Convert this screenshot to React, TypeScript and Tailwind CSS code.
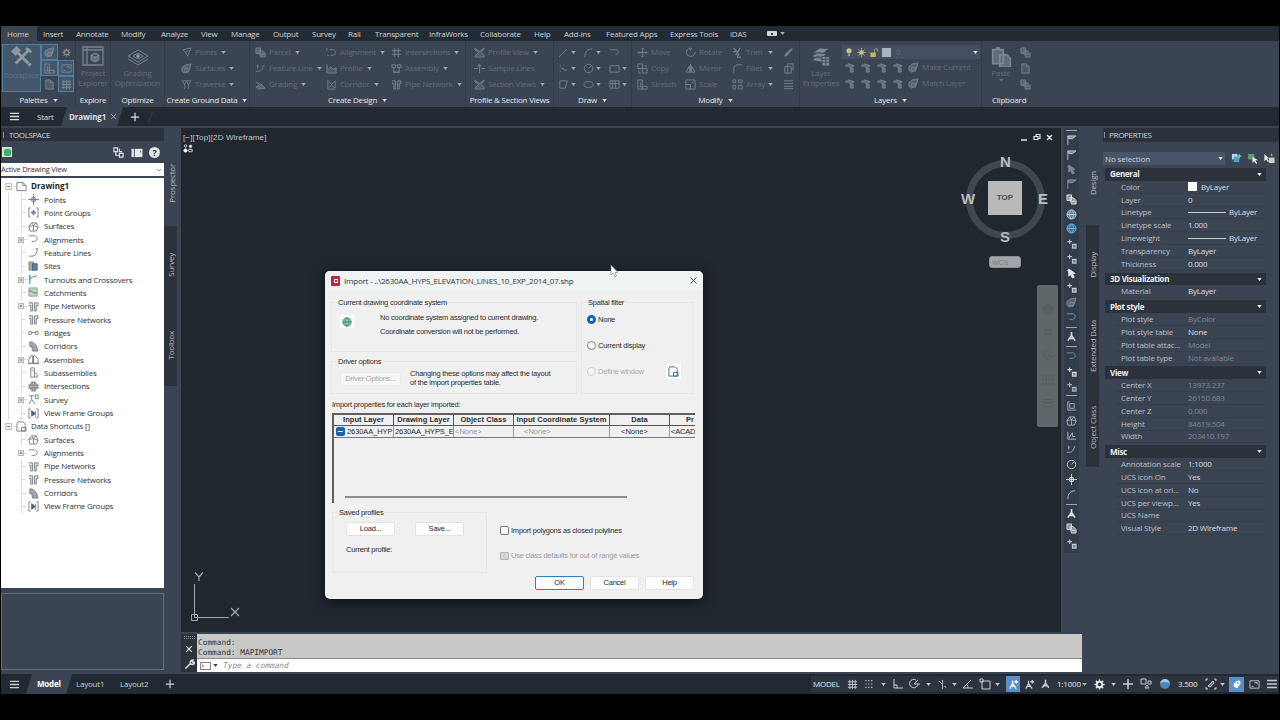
import type { ReactNode } from "react";
import clsx from "clsx";

const glyphs: Record<string, ReactNode> = {
  tools: (
    <>
      <path d="M2.5 2.5l7 7M9.5 2.5l-7 7" strokeWidth="1.6" />
      <path d="M1 3l2-2 1.5 1.5-2 2zM8 1.5c1 0 2 .5 3 2M9.5 10.8l1.3-1.3" strokeWidth="1.4" />
    </>
  ),
  points: <path d="M2 3l9-2-4 9-2-4zM5 6l3-2" />,
  surface: <path d="M1 5l4-3 6-1-2 7-5 3-3-2zM4 6h4v4H4z" fill="currentColor" fillOpacity=".5" />,
  traverse: <path d="M1 2h10M1 2l3 4 2-4 2 4 3-4M4 6v5M8 6v5" />,
  parcel: <path d="M1 1h5v6H1zM4 4h4l3 3v4H6zM6 8h4" fill="currentColor" fillOpacity=".5" />,
  feature: <path d="M1 9h3c4 0 4-4 6-7M3 2v4M2 3l2 1" />,
  grading: <path d="M1 3l4 3-4 3 3 2 7-1-5-5" fill="currentColor" fillOpacity=".5" />,
  align: <path d="M1 9h2M4 3h4c3 0 3 6 0 6H5M1 1v3" />,
  profile: <path d="M1 1v10h10V5L8 7 5 4 3 7" fill="currentColor" fillOpacity=".4" />,
  corridor: <path d="M2 1v10h8M3 2l3 4 4-4v8L6 7 3 9" />,
  inter: <path d="M4 1v10M8 1v10M1 4h10M1 8h10" />,
  assembly: <path d="M1 2h4v3H1zM7 2h4v3H7zM3 5v5h6V5M2 10h8" />,
  pipe: <path d="M1 2h4v9H3V5H1M7 2h4v3H9v6H7z" fill="currentColor" fillOpacity=".25" />,
  pview: <path d="M1 1v2l4 3-4 4v1h10v-2L8 6l3-4V1L6 5z" fill="currentColor" fillOpacity=".4" />,
  sample: <path d="M0 6h4M6 2v9M4 4l2-3 2 3M8 6h4" />,
  line: <path d="M1 11L10 2" />,
  arc: <path d="M2 11C2 5 5 2 10 2" />,
  pline: <path d="M1 3h6c5 0 5 5 0 5" />,
  dots: <path d="M2 3h1M6 2h1M5 6h1M2 9h1M8 9l2-2M3 5l5 3" />,
  circle: (
    <>
      <circle cx="6" cy="6" r="4.6" />
      <path d="M6 6l3-3" />
    </>
  ),
  rect: <path d="M1 3h10v7H1zM1 6h1" />,
  poly: <path d="M2 2h8l-2 8H2z" />,
  ellipse: <ellipse cx="6" cy="6" rx="5" ry="3.2" />,
  hatch: <path d="M1 2h10v8H1zM4 2v8M7 2v8M1 5h10" />,
  move: <path d="M6 1v10M1 6h10M4.5 2.5L6 1l1.5 1.5M4.5 9.5L6 11l1.5-1.5M2.5 4.5L1 6l1.5 1.5M9.5 4.5L11 6 9.5 7.5" />,
  copy: <path d="M1 1h5v5H1zM6 6h5v5H6zM8 3l2 0v2M2 8v3h2" />,
  stretch: <path d="M1 1h5v10H1zM6 8h5v3H6M4 3v6M3 8l1 1 1-1" />,
  rotate: <path d="M5 1.5A4.5 4.5 0 1 0 10.5 7M10.5 7l1-2M8 2L5 1l1 3" />,
  mirror: <path d="M6 1v10M5 3L1 10h4zM7 3l4 7H7z" />,
  scale: <path d="M1 1h10v10H1zM1 6h5v5M7 5l2-2" />,
  trim: <path d="M2 1l6 8M9 1L4 9M1 5h4M8 9a1.5 1.5 0 1 0 1 1" strokeWidth="1.3" />,
  fillet: <path d="M2 11V7c0-4 2-5 6-5h3" />,
  array: <path d="M1 1h3v3H1zM1 7h3v4H1zM7 1h4v3H7zM7 7h4v4H7z" />,
  brush: <path d="M2 10l2-3 6-5-5 6z" strokeWidth="1.6" />,
  explode: <path d="M2 4h7v7H2zM5 4V1h6v6H9M5 4v7" />,
  offset: <path d="M1 2h10M1 5h10M1 8h10M1 10.5h10" />,
  layer: <path d="M1 4l4-2 6 2-3 3-3-2zM7 7h3v4H7z" fill="currentColor" fillOpacity=".7" />,
  page: <path d="M2 1h5l3 3v7H2zM7 1v3h3" fill="currentColor" fillOpacity=".35" />,
  doc: <path d="M1 1.500h6.500l3.500 3.500v5.500H1zM7.500 1.500V5H11" />,
  target: (
    <>
      <path d="M6 0v12M0 6h12" />
      <circle cx="6" cy="6" r="2.5" fill="currentColor" fillOpacity=".4" />
    </>
  ),
  pgroup: <path d="M3 1H1v10h2M9 1h2v10H9M6 3v6M3 6h6M4.5 4.5h3v3h-3z" />,
  tin: <path d="M1 6l3-4 5 0 2 5-2 4H2zM1 6l5-1 5 2M4 2l2 3 3-3M6 5v6" />,
  hook: <path d="M1 2h6c4 0 4 6 0 6H4" />,
  curve: <path d="M1 10h3c4 0 5-2 6-6V2M8 2h3" />,
  sites: (
    <>
      <path d="M1 1h5v9H1z" stroke="#a58f62" fill="#9cab99" />
      <path d="M5 3h5v7H5z" stroke="#3f5b78" fill="#5486ae" />
    </>
  ),
  turnout: (
    <>
      <path d="M2 11V7c0-3 3-4 8-5" stroke="#3478a8" />
      <path d="M2 1v6" stroke="#38a0d0" strokeWidth="1.6" />
    </>
  ),
  catchment: (
    <>
      <path d="M1 1h9v9H1z" stroke="#b49777" fill="#b8d5c0" />
      <path d="M1 4c4 0 4 4 9 2" stroke="#3e80bb" />
    </>
  ),
  bridge: <path d="M1 5h3v3H1zM8 5h3v3H8zM4 6h4" />,
  road: <path d="M2 1h2c5 2 6 6 7 10H5L4 6H2z" fill="currentColor" fillOpacity=".7" />,
  bell: <path d="M1 10V6l2-4h2v8zM6 10V2h2l3 4v4zM0 10.500h12" />,
  sub: <path d="M3 1h4v10H3zM7 6l3 2v3H7M4 4h2" />,
  cross: (
    <>
      <circle cx="6" cy="6" r="4.500" fill="currentColor" fillOpacity=".5" />
      <path d="M4.500 0v12M7.500 0v12M0 4.500h12M0 7.500h12" />
    </>
  ),
  globe: (
    <>
      <circle cx="6" cy="6" r="5" fill="currentColor" fillOpacity=".45" />
      <path d="M1 6h10M6 1c-3 3-3 7 0 10M6 1c3 3 3 7 0 10" />
    </>
  ),
  survey: <path d="M1 2h6M4 2v4l-3 5M4 6l4 5M8 1h3v4H8z" />,
  vframe: (
    <>
      <path d="M3 1H1v10h2M9 1h2v10H9M8 3v7" />
      <path d="M4 3v6l4-3z" fill="#44617d" stroke="#44617d" />
    </>
  ),
  folder: <path d="M1 3l1-2h6l2 2v8H1zM6 7h5v4H6z" />,
  flag: <path d="M2 11V1M2 1h9L7 4H3z" fill="currentColor" fillOpacity=".6" />,
  node: <path d="M4 1.500v5M1.500 4h5M7 7h4v4H7z" fill="currentColor" fillOpacity=".5" strokeWidth="1.200" />,
  cursor: <path d="M3 1v8l2-2 2 4 2-1-2-4h3zM1 3h2" fill="currentColor" />,
  box: <path d="M2 2v9h9M4 4h5v5H4zM2 2h2" />,
  triNode: <path d="M2 10h9M2 2v8M3 9l4-6M7 3v4h3" />,
  plus: <path d="M6 1v10M1 6h10" strokeWidth="1.5" />,
  menu: <path d="M1 2.500h10M1 6h10M1 9.500h10" strokeWidth="1.4" />,
  grid: <path d="M3 1v10M6 1v10M9 1v10M1 3h10M1 6h10M1 9h10" />,
  snap: <path d="M1.500 2h9M1.500 6h9M1.500 10h9" strokeDasharray="1.500 2" strokeWidth="1.4" />,
  ortho: <path d="M2 1v9h9M2 7h3v3" />,
  polar: <path d="M10 6a4.200 4.200 0 1 1-2-4M6 6h6M6 6l4-4" />,
  iso: <path d="M2 2l4 4v5M6 6l0-5M8 8l2 1" />,
  otrack: <path d="M1 10h10M1 10l8-8M6 10a4 4 0 0 0-1-3" />,
  osnap: <path d="M3 3h8v8H3zM1 1h3v3H1z" />,
  person: <path d="M6 1v4M6 5L2 10.500M6 5l4 5.500M4 8h4" strokeWidth="1.800" />,
  annot: <path d="M5 2v4M5 5L2 10.500M5 5l4 5.500M3.500 8h4M9 1v4M7 3h4" strokeWidth="1.500" />,
  gear: (
    <>
      <circle cx="6" cy="6" r="3" strokeWidth="2" />
      <path d="M6 .5v2M6 9.500v2M.5 6h2M9.500 6h2M2 2l1.500 1.500M8.500 8.500L10 10M10 2L8.500 3.500M3.500 8.500L2 10" strokeWidth="1.500" />
    </>
  ),
  units: <path d="M1 1h5v5H1zM8 3h3v3H8zM5 10l2-3 2 3z" />,
  isolate: <path d="M1 3V1h2M9 1h2v2M11 9v2H9M3 11H1V9M3 8l5-5 1 2-4 4z" fill="currentColor" fillOpacity=".4" />,
  clean: <path d="M1 2h10v8H1zM6 4h3v2M3 8h2" />,
  wrench: <path d="M1.500 10.500L7 5M7 5c-1-2 1-4 3-4L9 3l1 1 1.500-.5c0 2-2 3.500-4.500 1.500z" strokeWidth="1.6" />,
  paste: <path d="M1 2h6v8H1zM3 1h2M5 5h4l2 2v5H5z" fill="currentColor" fillOpacity=".6" />,
};

function Glyph({ name, className = "h-[11px] w-[11px]" }: { name: string; className?: string }) {
  return (
    <svg
      viewBox="0 0 12 12"
      fill="none"
      stroke="currentColor"
      strokeWidth="1"
      className={clsx("shrink-0", className)}
    >
      {glyphs[name]}
    </svg>
  );
}

function Caret({ className = "text-[#a9b0b9]" }: { className?: string }) {
  return (
    <svg viewBox="0 0 6 4" className={clsx("h-[3px] w-[5px] shrink-0", className)}>
      <path d="M0 0h6L3 4z" fill="currentColor" />
    </svg>
  );
}

const menus = [
  ["Home", "w-[36px] bg-[#3b4453]"],
  ["Insert", "w-[33px]"],
  ["Annotate", "w-[45px]"],
  ["Modify", "w-[40px]"],
  ["Analyze", "w-[40px]"],
  ["View", "w-[30px]"],
  ["Manage", "w-[42px]"],
  ["Output", "w-[39px]"],
  ["Survey", "w-[36px]"],
  ["Rail", "w-[27px]"],
  ["Transparent", "w-[54px]"],
  ["InfraWorks", "w-[51px]"],
  ["Collaborate", "w-[54px]"],
  ["Help", "w-[30px]"],
  ["Add-ins", "w-[42px]"],
  ["Featured Apps", "w-[64px]"],
  ["Express Tools", "w-[60px]"],
  ["iDAS", "w-[30px]"],
];

function MenuBar() {
  return (
    <div className="flex h-[15px] items-center bg-[#222b33] text-[8px] text-[#ced2d6]">
      {menus.map(([label, cls]) => (
        <div key={label} className={clsx("flex h-full items-center whitespace-nowrap pl-[6px]", cls)}>
          {label}
        </div>
      ))}
      <div className="ml-[13px] flex items-center gap-[3px]">
        <span className="flex h-[5px] w-[10px] items-center justify-center rounded-[1px] bg-[#d5d8da]">
          <span className="h-[2px] w-[2px] bg-[#333]" />
        </span>
        <Caret />
      </div>
    </div>
  );
}

type CmdProps = { icon: string; label?: string; caret?: boolean };

function Cmd({ icon, label, caret }: CmdProps) {
  return (
    <div className="flex h-[16px] items-center whitespace-nowrap">
      <Glyph name={icon} className="h-[11px] w-[11px] text-[#75808d]" />
      {label && <span className="ml-[3px]">{label}</span>}
      {caret && <Caret className={label ? "ml-[4px] text-[#a2a9b3]" : "ml-[2px] text-[#a2a9b3]"} />}
    </div>
  );
}

function CmdCol({ items, className }: { items: CmdProps[]; className: string }) {
  return (
    <div className={clsx("flex shrink-0 flex-col", className)}>
      {items.map((item, i) => (
        <Cmd key={i} {...item} />
      ))}
    </div>
  );
}

function Panel({
  title,
  caret,
  className,
  children,
}: {
  title: string;
  caret?: boolean;
  className: string;
  children: ReactNode;
}) {
  return (
    <div className={clsx("flex shrink-0 flex-col border-r border-[#323b48]", className)}>
      <div className="flex h-[52px] pt-[3px]">{children}</div>
      <div className="flex h-[14px] items-center justify-center gap-[5px] whitespace-nowrap text-[8px] text-[#e6e8ea]">
        {title}
        {caret && <Caret className="text-[#dfe2e5]" />}
      </div>
    </div>
  );
}

function Ribbon() {
  return (
    <div className="flex h-[66px] bg-[#3b4453] text-[8px] text-[#616b7a]">
      <Panel title="Palettes" caret className="w-[75px] pl-px">
        <div className="flex h-[48px] w-[39px] flex-col items-center border border-[#537d9f] bg-[#42566c] pt-[1px]">
          <Glyph name="tools" className="h-[22px] w-[22px] text-[#8f979f]" />
          <span className="mt-[2px] leading-[10px] text-[#647285]">Toolspace</span>
        </div>
        <div className="grid grid-cols-[17px_16px] grid-rows-[16px_16px_16px] text-[#7f8994]">
          <div className="flex items-center justify-center border border-[#537d9f] bg-[#42566c]"><Glyph name="surface" /></div>
          <div className="flex items-center justify-center"><Glyph name="gear" className="h-[9px] w-[9px]" /></div>
          <div className="flex items-center justify-center border border-[#537d9f] bg-[#42566c]"><Glyph name="stretch" /></div>
          <div className="flex items-center justify-center border border-[#537d9f] bg-[#42566c]"><Glyph name="clean" /></div>
          <div className="flex items-center justify-center"><Glyph name="page" /></div>
          <div className="flex items-center justify-center border border-[#537d9f] bg-[#42566c]"><Glyph name="grid" /></div>
        </div>
      </Panel>
      <Panel title="Explore" className="w-[35px]">
        <div className="flex w-full flex-col items-center pt-[2px] leading-[10px]">
          <svg viewBox="0 0 22 20" className="h-[20px] w-[22px]" fill="none" stroke="#78828e">
            <path d="M1 1h20v18H1zM5 1v18M1 4h20" strokeWidth="1.300" />
            <path d="M9 9l4-2 4 2v5l-4 2-4-2zM9 9l4 2 4-2M13 11v5" fill="#66707d" />
          </svg>
          <span className="mt-[2px]">Project</span>
          <span>Explorer</span>
        </div>
      </Panel>
      <Panel title="Optimize" className="w-[54px]">
        <div className="flex w-full flex-col items-center pt-[2px] leading-[10px]">
          <svg viewBox="0 0 22 20" className="h-[20px] w-[22px]" fill="none" stroke="#78828e">
            <path d="M1 10l10-6 10 6-10 6zM6 10l5-3 5 3-5 3zM1 13l10 6 10-6" />
            <path d="M11 8l2 2-2 2-2-2z" fill="#8d969f" />
          </svg>
          <span className="mt-[2px]">Grading</span>
          <span>Optimization</span>
        </div>
      </Panel>
      <Panel title="Create Ground Data" caret className="w-[85px]">
        <CmdCol
          className="ml-[16px]"
          items={[
            { icon: "points", label: "Points", caret: true },
            { icon: "surface", label: "Surfaces", caret: true },
            { icon: "traverse", label: "Traverse", caret: true },
          ]}
        />
      </Panel>
      <Panel title="Create Design" caret className="w-[216px]">
        <CmdCol
          className="ml-[5px] w-[71px]"
          items={[
            { icon: "parcel", label: "Parcel", caret: true },
            { icon: "feature", label: "Feature Line", caret: true },
            { icon: "grading", label: "Grading", caret: true },
          ]}
        />
        <CmdCol
          className="w-[65px]"
          items={[
            { icon: "align", label: "Alignment", caret: true },
            { icon: "profile", label: "Profile", caret: true },
            { icon: "corridor", label: "Corridor", caret: true },
          ]}
        />
        <CmdCol
          className="w-[70px]"
          items={[
            { icon: "inter", label: "Intersections", caret: true },
            { icon: "assembly", label: "Assembly", caret: true },
            { icon: "pipe", label: "Pipe Network", caret: true },
          ]}
        />
      </Panel>
      <Panel title="Profile & Section Views" className="w-[88px]">
        <CmdCol
          className="ml-[8px]"
          items={[
            { icon: "pview", label: "Profile View", caret: true },
            { icon: "sample", label: "Sample Lines" },
            { icon: "pview", label: "Section Views", caret: true },
          ]}
        />
      </Panel>
      <Panel title="Draw" caret className="w-[78px]">
        <CmdCol
          className="ml-[4px] w-[25px]"
          items={[
            { icon: "line", caret: true },
            { icon: "dots", caret: true },
            { icon: "poly", caret: true },
          ]}
        />
        <CmdCol
          className="w-[26px]"
          items={[
            { icon: "arc", caret: true },
            { icon: "circle", caret: true },
            { icon: "ellipse", caret: true },
          ]}
        />
        <CmdCol
          className="w-[22px]"
          items={[{ icon: "pline" }, { icon: "rect", caret: true }, { icon: "hatch", caret: true }]}
        />
      </Panel>
      <Panel title="Modify" caret className="w-[168px]">
        <CmdCol
          className="ml-[5px] w-[48px]"
          items={[
            { icon: "move", label: "Move" },
            { icon: "copy", label: "Copy" },
            { icon: "stretch", label: "Stretch" },
          ]}
        />
        <CmdCol
          className="w-[47px]"
          items={[
            { icon: "rotate", label: "Rotate" },
            { icon: "mirror", label: "Mirror" },
            { icon: "scale", label: "Scale" },
          ]}
        />
        <CmdCol
          className="w-[36px]"
          items={[
            { icon: "trim", label: "Trim" },
            { icon: "fillet", label: "Fillet" },
            { icon: "array", label: "Array" },
          ]}
        />
        <div className="flex w-[15px] flex-col">
          {[0, 1, 2].map((i) => (
            <div key={i} className="flex h-[16px] items-center">
              <Caret />
            </div>
          ))}
        </div>
        <CmdCol className="" items={[{ icon: "brush" }, { icon: "explode" }, { icon: "offset" }]} />
      </Panel>
      <Panel title="Layers" caret className="w-[182px]">
        <div className="flex w-[42px] flex-col items-center pt-[2px] leading-[10px]">
          <svg viewBox="0 0 22 22" className="h-[21px] w-[22px]" fill="#7d8691" stroke="#3b4453" strokeWidth=".8">
            <path d="M1 15l6-4 10 1-5 5zM1 11l6-4 10 1-5 5zM2 7l8-5 9 1-6 5z" />
            <path d="M12 11h8v10h-8zM12 14h8M12 17h8M16 11v10" />
          </svg>
          <span className="mt-[1px]">Layer</span>
          <span>Properties</span>
        </div>
        <div className="flex w-[138px] flex-col">
          <div className="mt-[1px] flex h-[14px] items-center bg-[#445062] pl-[3px]">
            <svg viewBox="0 0 9 11" className="h-[9px] w-[8px]"><circle cx="4.500" cy="3.500" r="3.200" fill="#c5bd83" /><path d="M3 7h3v3H3z" fill="#909690" /></svg>
            <svg viewBox="0 0 10 10" className="ml-[4px] h-[9px] w-[9px]"><circle cx="5" cy="5" r="2.600" fill="#c5bd83" /><path d="M5 0v10M0 5h10M1.500 1.500l7 7M8.500 1.500l-7 7" stroke="#c5bd83" strokeWidth=".7" /></svg>
            <svg viewBox="0 0 10 10" className="ml-[3px] h-[9px] w-[10px]"><path d="M1 5h6v5H1z" fill="#c5b55b" /><path d="M5.500 5V2.500a1.800 1.800 0 0 1 3.600 0V4" fill="none" stroke="#a9aa93" /></svg>
            <span className="ml-[3px] h-[9px] w-[9px] bg-[#a9b5bd]" />
            <span className="ml-[5px]">0</span>
            <Caret className="ml-auto mr-[2px] text-[#dfe2e5]" />
          </div>
          {["Make Current", "Match Layer"].map((label) => (
            <div key={label} className="flex h-[16px] items-center pl-[2px] text-[#75808d]">
              <div className="flex w-[78px] gap-[5px]">
                {[0, 1, 2, 3, 4].map((i) => (
                  <Glyph key={i} name={i === 4 ? "surface" : "layer"} />
                ))}
              </div>
              <span className="text-[#616b7a]">{label}</span>
            </div>
          ))}
        </div>
      </Panel>
      <div className="flex flex-col">
        <div className="flex h-[52px] pt-[3px]">
          <div className="flex w-[38px] flex-col items-center pt-[2px] leading-[10px]">
            <Glyph name="paste" className="h-[21px] w-[21px] text-[#7d8691]" />
            <span className="mt-[1px]">Paste</span>
            <Caret className="mt-[1px]" />
          </div>
          <CmdCol className="" items={[{ icon: "parcel" }, { icon: "page" }, { icon: "parcel" }]} />
        </div>
        <div className="flex h-[14px] items-center pl-[10px] text-[8px] text-[#e6e8ea]">Clipboard</div>
      </div>
    </div>
  );
}

function FileTabs() {
  return (
    <div className="flex h-[19px] items-center bg-[#212a32] text-[8px] text-[#dcdfe2]">
      <Glyph name="menu" className="ml-[8px] h-[11px] w-[11px]" />
      <span className="ml-[17px] w-[22px]">Start</span>
      <div className="ml-[2px] flex h-full w-[62px] items-center bg-[#3b4453] pl-[8px] font-bold [clip-path:polygon(6px_0,100%_0,56px_100%,0_100%)]">
        <span className="w-[40px] tracking-[-0.1px]">Drawing1</span>
        <svg viewBox="0 0 6 6" className="ml-[2px] h-[5px] w-[5px]" stroke="#aeb4ba"><path d="M0 0l6 6M6 0L0 6" /></svg>
      </div>
      <Glyph name="plus" className="ml-[7px] h-[10px] w-[10px]" />
      <span className="ml-[10px] h-[12px] w-px rotate-[20deg] bg-[#35404b]" />
    </div>
  );
}

const tree: { label: string; icon: string; exp?: boolean; root?: boolean; bold?: boolean }[] = [
  { label: "Drawing1", icon: "doc", root: true, exp: true, bold: true },
  { label: "Points", icon: "target" },
  { label: "Point Groups", icon: "pgroup" },
  { label: "Surfaces", icon: "tin" },
  { label: "Alignments", icon: "hook", exp: true },
  { label: "Feature Lines", icon: "curve" },
  { label: "Sites", icon: "sites" },
  { label: "Turnouts and Crossovers", icon: "turnout", exp: true },
  { label: "Catchments", icon: "catchment" },
  { label: "Pipe Networks", icon: "pipe", exp: true },
  { label: "Pressure Networks", icon: "pipe" },
  { label: "Bridges", icon: "bridge" },
  { label: "Corridors", icon: "road" },
  { label: "Assemblies", icon: "bell", exp: true },
  { label: "Subassemblies", icon: "sub" },
  { label: "Intersections", icon: "cross" },
  { label: "Survey", icon: "survey", exp: true },
  { label: "View Frame Groups", icon: "vframe" },
  { label: "Data Shortcuts []", icon: "folder", root: true, exp: true },
  { label: "Surfaces", icon: "tin" },
  { label: "Alignments", icon: "hook", exp: true },
  { label: "Pipe Networks", icon: "pipe" },
  { label: "Pressure Networks", icon: "pipe" },
  { label: "Corridors", icon: "road" },
  { label: "View Frame Groups", icon: "vframe" },
];

function Toolspace() {
  return (
    <div className="flex w-[163px] shrink-0 flex-col bg-[#3b4453]">
      <div className="flex h-[13px] items-center bg-[#2b323c] text-[8px] text-[#d0d4d8]">
        <span className="ml-[2px] h-[6px] w-px bg-[#8a929b]" />
        <span className="ml-[5px] tracking-[-0.4px]">TOOLSPACE</span>
      </div>
      <div className="flex h-[22px] items-center">
        <span className="ml-px flex h-[10px] w-[10px] items-center justify-center bg-[#c9e6d3]">
          <span className="h-[7px] w-[7px] rounded-[2px] bg-[#3fae6a]" />
        </span>
        <svg viewBox="0 0 12 12" className="ml-[101px] h-[11px] w-[11px]" fill="none" stroke="#e0e3e5"><path d="M1 1h4v4H1zM3 5v4h4M7 7h4v4H7zM7 2v3h3" strokeWidth="1.300" /></svg>
        <svg viewBox="0 0 12 12" className="ml-[7px] h-[11px] w-[12px]"><path d="M0 2h12v9H0z" fill="#e7e9ea" /><path d="M3 2v9M10 4v2" stroke="#3b4453" /></svg>
        <span className="ml-[6px] flex h-[11px] w-[11px] items-center justify-center rounded-full bg-[#e2e4e6] text-[9px] font-bold leading-none text-[#3b4453]">?</span>
      </div>
      <div className="flex h-[13px] items-center justify-between bg-white pr-[2px] text-[7.500px] text-[#333]">
        <span className="tracking-[-0.23px]">Active Drawing View</span>
        <svg viewBox="0 0 8 5" className="h-[4px] w-[6px]" fill="none" stroke="#777"><path d="M1 1l3 3 3-3" /></svg>
      </div>
      <div className="mt-[2px] h-[410px] bg-white pt-[1.500px] text-[8px] text-[#333]">
        {tree.map((n, i) => (
          <div key={i} className="flex h-[13.350px] items-center whitespace-nowrap">
            {n.root ? (
              <span className="ml-[4px] flex h-[7px] w-[7px] items-center justify-center border border-[#c4c4c4] bg-[#eee]"><span className="h-px w-[3px] bg-[#888]" /></span>
            ) : (
              <span className="ml-[7px] flex h-full w-[11px] items-center">
                {i < 18 && <span className="h-full w-px bg-[#dcdcdc]" />}
              </span>
            )}
            {n.root ? (
              <span className="w-[4px] border-t border-[#d5d5d5]" />
            ) : (
              <span className="flex h-full w-[9px] items-center">
                {n.exp ? (
                  <span className="-ml-[1px] flex h-[6px] w-[6px] shrink-0 items-center justify-center border border-[#bbb] bg-[#ddd]"><span className="h-[2px] w-[2px] bg-[#999]" /></span>
                ) : (
                  <span className="ml-[2px] h-full w-px bg-[#dcdcdc]" />
                )}
                <span className="h-px w-[4px] bg-[#dcdcdc]" />
              </span>
            )}
            <Glyph name={n.icon} className="h-[11px] w-[11px] text-[#7b7f83]" />
            <span className={n.bold ? "ml-[4px] font-bold tracking-[0px] text-[#222]" : n.root ? "ml-[4px]" : "ml-[5px]"}>{n.label}</span>
          </div>
        ))}
      </div>
      <div className="mt-[5px] h-[77px] border border-[#5e7282]" />
    </div>
  );
}

function SideTab({ label, className }: { label: string; className: string }) {
  return (
    <div className={clsx("flex w-[13px] items-center justify-center text-[8px] text-[#b4bac1]", className)}>
      <span className="rotate-180 whitespace-nowrap [writing-mode:vertical-rl]">{label}</span>
    </div>
  );
}

function ViewCube() {
  return (
    <div className="absolute left-[780px] top-[24px] flex w-[88px] flex-col items-center font-['Liberation_Sans'] tracking-normal">
      <div className="relative flex h-[94px] w-[88px] items-center justify-center text-[15px] font-bold leading-none text-[#b9bdbf]">
        <div className="h-[79px] w-[79px] rounded-full border-[7px] border-[#41474c]" />
        <div className="absolute left-[27px] top-[29px] flex h-[34px] w-[34px] items-center justify-center bg-[#b9b9b9] text-[8px] text-[#4b4f52]">TOP</div>
        <span className="absolute left-[39px] top-[2px]">N</span>
        <span className="absolute left-[39px] top-[77px]">S</span>
        <span className="absolute left-0 top-[39px]">W</span>
        <span className="absolute left-[77px] top-[39px]">E</span>
      </div>
      <div className="mt-[10px] flex h-[12px] w-[32px] items-center rounded-[3px] border border-[#8b8f92] bg-[#a3a6a9] pl-[2px] text-[7px] text-[#7b7e81]">WCS</div>
    </div>
  );
}

function GroupBox({ title, className, children }: { title: string; className: string; children: ReactNode }) {
  return (
    <div className={clsx("flex flex-col border border-[#e7e7e7]", className)}>
      <span className="-mt-[5px] ml-[5px] h-[9px] self-start bg-[#f0f0f0] px-[1px] leading-[9px]">{title}</span>
      {children}
    </div>
  );
}

function DlgButton({ label, className }: { label: string; className?: string }) {
  return (
    <button className={clsx("flex h-[14px] w-[49px] items-center justify-center rounded-[2px] border bg-[#fdfdfd] leading-none", className ?? "border-[#e3e3e3]")}>
      {label}
    </button>
  );
}

const columns = [
  ["Input Layer", "w-[60px]"],
  ["Drawing Layer", "w-[60px]"],
  ["Object Class", "w-[60px]"],
  ["Input Coordinate System", "w-[96px]"],
  ["Data", "w-[60px]"],
];

function ImportDialog() {
  return (
    <div className="absolute left-[144px] top-[143px] flex h-[328px] w-[378px] flex-col rounded-[5px] bg-[#f0f0f0] font-['Liberation_Sans'] text-[7.500px] tracking-[-0.22px] text-[#2b2b2b] shadow-[0_3px_14px_rgba(0,0,0,0.55)]">
      <div className="flex h-[19px] items-center rounded-t-[5px] bg-[#f0f3f4] pl-[6px] font-['Open_Sans','Noto_Sans',sans-serif] text-[8px] text-[#333]">
        <span className="flex h-[10px] w-[9px] items-center justify-center rounded-[1px] bg-[#c51f4b]">
          <span className="h-[4px] w-[4px] border border-white" />
        </span>
        <span className="ml-[4px] whitespace-nowrap tracking-[-0.2px]">Import - ..\2630AA_HYPS_ELEVATION_LINES_10_EXP_2014_07.shp</span>
        <svg viewBox="0 0 8 8" className="ml-auto mr-[6px] h-[7px] w-[7px]" stroke="#333"><path d="M.5.5l7 7M7.500.5l-7 7" /></svg>
      </div>

      <div className="mt-[12px] flex h-[92px] pl-[6px]">
        <div className="flex w-[246px] flex-col">
          <GroupBox title="Current drawing coordinate system" className="h-[50px]">
            <div className="mt-[6px] flex">
              <span className="ml-[8px] mt-[2px] flex h-[13px] w-[14px] items-center justify-center bg-white"><Glyph name="globe" className="h-[10px] w-[10px] text-[#2c8a63]" /></span>
              <div className="ml-[26px] flex flex-col gap-[4px] whitespace-nowrap leading-[9.500px]">
                <span>No coordinate system assigned to current drawing.</span>
                <span>Coordinate conversion will not be performed.</span>
              </div>
            </div>
          </GroupBox>
          <GroupBox title="Driver options" className="mt-[9px] h-[33px]">
            <div className="mt-[3px] flex items-start">
              <button className="ml-[8px] mt-[3px] flex h-[14px] w-[61px] items-center justify-center rounded-[2px] border border-[#eaeaea] bg-[#f6f6f6] text-[#a5a5a5]">Driver Options...</button>
              <div className="ml-[9px] whitespace-nowrap leading-[9px]">
                Changing these options may affect the layout
                <br />
                of the import properties table.
              </div>
            </div>
          </GroupBox>
        </div>
        <GroupBox title="Spatial filter" className="ml-[4px] h-[92px] w-[112px]">
          <div className="flex flex-col pl-[5px] leading-none">
            <div className="mt-[8px] flex h-[9px] items-center gap-[2px]">
              <span className="h-[9px] w-[9px] rounded-full border-[3px] border-[#1465ad] bg-white" />
              None
            </div>
            <div className="mt-[17px] flex h-[9px] items-center gap-[2px]">
              <span className="h-[9px] w-[9px] rounded-full border border-[#858585] bg-[#f6f6f6]" />
              Current display
            </div>
            <div className="mt-[17px] flex h-[9px] items-center gap-[2px] whitespace-nowrap text-[#a9a9a9]">
              <span className="h-[9px] w-[9px] rounded-full border border-[#ccc] bg-[#f6f6f6]" />
              Define window
              <span className="ml-[20px] flex h-[15px] w-[15px] shrink-0 items-center justify-center bg-[#fbfcfd] text-[#3f6f93]"><Glyph name="folder" /></span>
            </div>
          </div>
        </GroupBox>
      </div>

      <span className="ml-[7px] mt-[6px] leading-[9px]">Import properties for each layer imported:</span>
      <div className="ml-[7px] mt-[4px] flex h-[90px] w-[363px] flex-col overflow-hidden border-l-2 border-t-2 border-[#606060]">
        <div className="flex h-[11px] text-[7.500px] font-bold tracking-[0.050px]">
          {columns.map(([label, cls]) => (
            <div key={label} className={clsx("flex shrink-0 items-center justify-center whitespace-nowrap border-b border-r border-[#555]", cls)}>{label}</div>
          ))}
          <div className="flex flex-1 items-center whitespace-nowrap border-b border-[#555] pl-[16px]">Pr</div>
        </div>
        <div className="flex h-[12px] shrink-0 items-center border-b border-[#777] tracking-[0px]">
          <div className="flex h-full w-[60px] shrink-0 items-center whitespace-nowrap border-r border-[#999] pl-[2px]">
            <span className="mr-[2px] flex h-[9px] w-[9px] shrink-0 items-center justify-center rounded-[2px] bg-[#1465ad]"><span className="h-px w-[5px] bg-white" /></span>
            <span className="tracking-[-0.1px]">2630AA_HYP</span>
          </div>
          <div className="flex h-full w-[60px] shrink-0 items-center whitespace-nowrap border-r border-[#999] pl-[1px] tracking-[-0.150px]">2630AA_HYPS_E</div>
          <div className="flex h-full w-[60px] shrink-0 items-center border-r border-[#999] pl-[1px] text-[#999]">&lt;None&gt;</div>
          <div className="flex h-full w-[96px] shrink-0 items-center border-r border-[#999] pl-[10px] text-[#999]">&lt;None&gt;</div>
          <div className="flex h-full w-[60px] shrink-0 items-center border-r border-[#999] pl-[11px]">&lt;None&gt;</div>
          <div className="pl-px tracking-[-0.2px]">&lt;ACAD</div>
        </div>
        <div className="ml-[11px] mt-[58px] h-[2px] w-[282px] bg-[#8e8e8e]" />
      </div>

      <div className="mt-[9px] flex h-[63px] pl-[7px]">
        <GroupBox title="Saved profiles" className="h-[61px] w-[155px]">
          <div className="mt-[5px] flex gap-[20px] pl-[13px]">
            <DlgButton label="Load..." />
            <DlgButton label="Save..." />
          </div>
          <span className="ml-[13px] mt-[9px] leading-[9px]">Current profile:</span>
        </GroupBox>
        <div className="flex flex-col pl-[13px] leading-none">
          <div className="mt-[14px] flex h-[9px] items-center gap-[2px] whitespace-nowrap">
            <span className="h-[9px] w-[9px] rounded-[2px] border border-[#777] bg-[#fafafa]" />
            Import polygons as closed polylines
          </div>
          <div className="mt-[16px] flex h-[9px] items-center gap-[2px] whitespace-nowrap text-[#9c9c9c]">
            <span className="h-[8px] w-[9px] rounded-[1px] border border-[#b5b5b5] bg-[#d5d5d5]" />
            Use class defaults for out of range values
          </div>
        </div>
      </div>
      <div className="mt-[1px] flex gap-[6px] pl-[210px]">
        <DlgButton label="OK" className="border-[#2d7fb8]" />
        <DlgButton label="Cancel" />
        <DlgButton label="Help" />
      </div>
    </div>
  );
}

function Drawing() {
  return (
    <div className="relative w-[880px] shrink-0 bg-[#20272f]">
      <div className="flex justify-between pr-[7px] pt-[4px] text-[8px] leading-[11px] text-[#c2c6c9]">
        <div className="flex flex-col pl-[2px] font-['Liberation_Sans'] tracking-[0.150px]">
          <span>[−][Top][2D Wireframe]</span>
          <svg viewBox="0 0 12 11" className="h-[10px] w-[10px]" fill="none" stroke="#e5e5e5"><circle cx="3" cy="3" r="1.500" /><circle cx="9" cy="3.500" r="1.500" fill="#ddd" /><circle cx="3" cy="8.500" r="2" fill="#fff" /><path d="M7 7h4v3H7z" /></svg>
        </div>
        <svg viewBox="0 0 34 10" className="h-[10px] w-[34px]" fill="none" stroke="#e0e3e5" strokeWidth="1.500">
          <path d="M1 8h6M27 3l5 5M32 3l-5 5" />
          <path d="M14 4.500h4v3h-4zM16 4V2.500h4v4h-2" strokeWidth="1.200" />
        </svg>
      </div>
      <ViewCube />
      <div className="absolute left-[856px] top-[157px] flex h-[142px] w-[21px] flex-col items-center justify-around rounded-[2px] bg-[#60676b] py-[12px] text-[#575e62]">
        <Glyph name="globe" className="h-[12px] w-[12px]" />
        <Glyph name="inter" className="h-[12px] w-[12px]" />
        <Glyph name="polar" className="h-[12px] w-[12px]" />
        <Glyph name="hatch" className="h-[12px] w-[12px]" />
        <Glyph name="menu" className="h-[12px] w-[12px]" />
      </div>
      <svg viewBox="0 0 52 52" className="absolute left-[8px] top-[443px] h-[52px] w-[52px]" fill="none" stroke="#a3a8ab">
        <path d="M5.500 13v34M5.500 46.500h34M2.500 43.500h6v6h-6z" />
        <path d="M6 1.500l4 4.500 4-4.500M10 6v4M42 37l8 8M50 37l-8 8" strokeWidth="1.200" />
      </svg>
      <ImportDialog />
      <svg viewBox="0 0 8 12" className="absolute left-[429px] top-[137px] h-[12px] w-[8px]" fill="#fff" stroke="#777" strokeWidth=".6"><path d="M1 0v10l2-2 2 4 1.500-1L5 7.500h3z" /></svg>
    </div>
  );
}

const toolIcons = [
  ["sep", ""],
  ["flag", "text-[#c5cacf]"],
  ["flag", "text-[#b5c5cf]"],
  ["cursor", "text-[#7d8893]"],
  ["flag", "text-[#8b95a0]"],
  ["parcel", "text-[#e5e7e9]"],
  ["globe", "text-[#a9d0ea]"],
  ["globe", "text-[#5fb4e6]"],
  ["node", "text-[#b8c2ca]"],
  ["node", "text-[#b8c2ca]"],
  ["cursor", "text-[#e2e5e7]"],
  ["node", "text-[#c8ced4]"],
  ["surface", "text-[#7f8b98]"],
  ["hook", "text-[#5da6cf]"],
  ["sep", ""],
  ["person", "text-[#d5d9dc]"],
  ["sep", ""],
  ["hook", "text-[#6d94b5]"],
  ["node", "text-[#d5d9dc]"],
  ["node", "text-[#a5b0ba]"],
  ["sep", ""],
  ["box", "text-[#a5b0ba]"],
  ["tin", "text-[#a5b0ba]"],
  ["triNode", "text-[#b5bec6]"],
  ["feature", "text-[#a5b0ba]"],
  ["circle", "text-[#c9d2c4]"],
  ["target", "text-[#d6d7bf]"],
  ["arc", "text-[#a5cde0]"],
  ["sep", ""],
  ["person", "text-[#dcdfe2]"],
  ["parcel", "text-[#dcdfe2]"],
  ["node", "text-[#b5d0e0]"],
];

function ToolColumn() {
  return (
    <div className="flex w-[25px] shrink-0 flex-col items-start bg-[#3b4453] pl-[3px]">
      <div className="flex w-[15px] flex-col items-center bg-[#333c49] pb-[2px]">
        {toolIcons.map(([name, cls], i) =>
          name === "sep" ? (
            <div key={i} className="flex h-[4.900px] items-center"><span className="h-px w-[11px] bg-[#9fa7af]" /></div>
          ) : (
            <div key={i} className="flex h-[14.750px] items-center"><Glyph name={name} className={clsx("h-[11px] w-[11px]", cls)} /></div>
          ),
        )}
      </div>
    </div>
  );
}

function CommandLine() {
  return (
    <div className="mt-[2px] flex h-[38px] w-[901px] font-['DejaVu_Sans_Mono'] text-[7.800px] tracking-normal text-[#333]">
      <div className="flex w-[16px] flex-col items-center justify-between bg-[#2b323c] py-[2px] text-[#d8dbde]">
        <span className="h-[3px] w-[11px] border-y border-dotted border-[#8f969d]" />
        <svg viewBox="0 0 6 6" className="h-[6px] w-[6px]" stroke="#e3e5e7" strokeWidth="1.200"><path d="M0 0l6 6M6 0L0 6" /></svg>
        <Glyph name="wrench" />
      </div>
      <div className="flex flex-1 flex-col">
        <div className="flex h-[25px] flex-col border-b border-[#8a8a8a] bg-[#c8c8c8] pl-px pt-[4px] leading-[9.800px]">
          <span>Command:</span>
          <span>Command: MAPIMPORT</span>
        </div>
        <div className="flex h-[13px] items-center bg-white pl-[3px] italic text-[#8d8d8d]">
          <svg viewBox="0 0 12 9" className="h-[8px] w-[11px]" fill="none" stroke="#666"><path d="M.5.5h11v8H.5zM2 3l2 1.500L2 6" /></svg>
          <Caret className="ml-[2px] text-[#444]" />
          <span className="ml-[5px]">Type a command</span>
        </div>
      </div>
    </div>
  );
}

const props: { title: string; rows: [string, string, string?][] }[] = [
  {
    title: "General",
    rows: [
      ["Color", "ByLayer", "swatch"],
      ["Layer", "0"],
      ["Linetype", "ByLayer", "line"],
      ["Linetype scale", "1.000"],
      ["Lineweight", "ByLayer", "line"],
      ["Transparency", "ByLayer"],
      ["Thickness", "0.000"],
    ],
  },
  { title: "3D Visualization", rows: [["Material", "ByLayer"]] },
  {
    title: "Plot style",
    rows: [
      ["Plot style", "ByColor", "dim"],
      ["Plot style table", "None"],
      ["Plot table attac...", "Model", "dim"],
      ["Plot table type", "Not available", "dim"],
    ],
  },
  {
    title: "View",
    rows: [
      ["Center X", "13973.237", "dim"],
      ["Center Y", "26150.683", "dim"],
      ["Center Z", "0.000", "dim"],
      ["Height", "84619.504", "dim"],
      ["Width", "203410.197", "dim"],
    ],
  },
  {
    title: "Misc",
    rows: [
      ["Annotation scale", "1:1000"],
      ["UCS icon On", "Yes"],
      ["UCS icon at ori...", "No"],
      ["UCS per viewp...", "Yes"],
      ["UCS Name", ""],
      ["Visual Style", "2D Wireframe"],
    ],
  },
];

function Properties() {
  return (
    <div className="flex flex-1 bg-[#3b4453] text-[8px]">
      <div className="flex w-[13px] flex-col pt-[13px]">
        <SideTab label="Design" className="h-[84px]" />
        <SideTab label="Display" className="h-[80px] bg-[#2b323c]" />
        <SideTab label="Extended Data" className="h-[82px] bg-[#2b323c]" />
        <SideTab label="Object Class" className="h-[80px] bg-[#2b323c]" />
      </div>
      <div className="flex flex-1 flex-col pl-[4px]">
        <div className="flex h-[14px] items-center bg-[#2b323c] text-[#d0d4d8]">
          <span className="ml-[1px] h-[6px] w-px bg-[#8a929b]" />
          <span className="ml-[4px] tracking-[-0.3px]">PROPERTIES</span>
        </div>
        <div className="mt-[10px] flex h-[13px] items-center">
          <div className="flex h-full w-[122px] items-center justify-between bg-[#485467] pl-[2px] pr-[2px] tracking-[-0.1px] text-[#cfd3d8]">
            No selection
            <Caret className="text-[#e3e5e8]" />
          </div>
          <svg viewBox="0 0 12 12" className="ml-[6px] h-[11px] w-[11px]"><path d="M1 1h6v6H1z" fill="#b5d9ee" /><path d="M3 4h6v6H3z" fill="#4ba3d3" /><path d="M9 1v5M6.500 3.500h5" stroke="#7fd06a" strokeWidth="1.400" /></svg>
          <svg viewBox="0 0 12 12" className="ml-[5px] h-[11px] w-[11px]"><path d="M1 1h7v6H1z" fill="#5c9c6c" /><path d="M6 4v7l2-2 2 3 1-1-2-3h3z" fill="#eee" /></svg>
          <svg viewBox="0 0 12 12" className="ml-[5px] h-[11px] w-[12px]"><path d="M1 1v8l2-2 2 3 1-1-2-3h2z" fill="#eee" /><path d="M6 5h6v6H6z" fill="#cfcfc3" /><path d="M9 0l1 3-2 0z" fill="#e1cf5a" /></svg>
        </div>
        <div className="mt-[3px] flex w-[163px] flex-col gap-[2px] pl-[2px]">
          {props.map((g) => (
            <div key={g.title}>
              <div className="flex h-[12.900px] items-center justify-between bg-[#2b323c] pl-[5px] pr-[4px] font-bold tracking-[-0.3px] text-[#eceef0]">
                {g.title}
                <Caret className="text-[#eceef0]" />
              </div>
              {g.rows.map(([name, value, kind]) => (
                <div key={name} className="ml-[12px] flex h-[12.820px] items-center whitespace-nowrap border-b border-[#353e4b] pl-[4px] text-[#b9c0c8]">
                  <span className="w-[67px] shrink-0 tracking-[-0.15px]">{name}</span>
                  {kind === "swatch" && <span className="mr-[4px] h-[9px] w-[9px] bg-white" />}
                  {kind === "line" && <span className="mr-[3px] h-px w-[38px] shrink-0 bg-[#c9ced3]" />}
                  <span className={kind === "dim" ? "text-[#7c8693]" : "text-[#dadee2]"}>{value}</span>
                </div>
              ))}
            </div>
          ))}
        </div>
      </div>
    </div>
  );
}

function StatusBar() {
  return (
    <div className="flex h-[20px] items-center bg-[#212a32] text-[8px] text-[#c8ccd0]">
      <Glyph name="menu" className="ml-[8px] h-[11px] w-[11px]" />
      <div className="ml-[6px] flex h-full w-[46px] items-center bg-[#3b4453] pl-[11px] font-bold text-white [clip-path:polygon(6px_0,100%_0,40px_100%,0_100%)]">Model</div>
      <span className="ml-[4px] w-[44px]">Layout1</span>
      <span className="w-[45px]">Layout2</span>
      <Glyph name="plus" className="h-[10px] w-[10px]" />
      <div className="ml-auto flex h-[16px] w-[468px] shrink-0 items-center bg-[#2b343f]">
        <span className="w-[36px] pl-[2px] text-[#e5e7e9]">MODEL</span>
        <Glyph name="grid" />
        <Glyph name="snap" className="ml-[6px] h-[10px] w-[10px]" />
        <Caret className="ml-[7px]" />
        <Glyph name="ortho" className="ml-[6px] h-[12px] w-[12px]" />
        <Glyph name="polar" className="ml-[4px] h-[12px] w-[12px]" />
        <Caret className="ml-[6px]" />
        <Glyph name="iso" className="ml-[6px] h-[11px] w-[11px]" />
        <Caret className="ml-[4px]" />
        <Glyph name="otrack" className="ml-[5px] h-[12px] w-[12px]" />
        <Glyph name="osnap" className="ml-[5px] h-[12px] w-[12px]" />
        <Caret className="ml-[4px]" />
        <span className="ml-[6px] flex h-[16px] w-[14px] items-center justify-center bg-[#5b8fc8] text-white"><Glyph name="annot" /></span>
        <Glyph name="annot" className="ml-[4px] h-[11px] w-[11px]" />
        <Glyph name="person" className="ml-[5px] h-[10px] w-[11px]" />
        <span className="ml-[6px] w-[25px] tracking-[-0.2px] text-[#e5e7e9]">1:1000</span>
        <Caret />
        <Glyph name="gear" className="ml-[7px] h-[11px] w-[11px] text-[#e5e7e9]" />
        <Caret className="ml-[6px]" />
        <Glyph name="plus" className="ml-[6px] h-[12px] w-[12px]" />
        <Glyph name="units" className="ml-[6px] h-[12px] w-[12px]" />
        <span className="ml-[8px] h-[10px] w-[10px] rounded-full border-t-[3px] border-[#a7c8e4] bg-[#4a86bb]" />
        <span className="ml-[7px] w-[28px] pl-[1px] text-[#e5e7e9]">3.500</span>
        <Glyph name="isolate" className="h-[12px] w-[12px]" />
        <Caret className="ml-[3px]" />
        <span className="ml-[4px] flex h-[15px] w-[15px] items-center justify-center bg-[#5b8fc8] text-white">
          <svg viewBox="0 0 12 12" className="h-[10px] w-[10px]"><path d="M2 6l4-4h4v4l-4 5-4-2z" fill="#fff" /><circle cx="7" cy="5" r="1" fill="#5b8fc8" /></svg>
        </span>
        <Glyph name="clean" className="ml-[5px] h-[11px] w-[11px]" />
        <Glyph name="menu" className="ml-[6px] h-[12px] w-[12px]" />
      </div>
    </div>
  );
}

function App() {
  return (
    <div className="h-[720px] w-[1280px] overflow-hidden bg-black px-px pt-[26px] font-['Open_Sans','Noto_Sans',sans-serif] leading-none tracking-[-0.22px]">
      <MenuBar />
      <Ribbon />
      <FileTabs />
      <div className="h-[2px] bg-[#3b4453]" />
      <div className="flex h-[546px] bg-[#3b4453]">
        <Toolspace />
        <div className="flex w-[17px] shrink-0 flex-col bg-[#3b4453] pt-[13px]">
          <SideTab label="Prospector" className="h-[85px] w-[16px]" />
          <SideTab label="Survey" className="h-[78px] bg-[#2b323c]" />
          <SideTab label="Toolbox" className="h-[82px] bg-[#2b323c]" />
        </div>
        <div className="flex w-[905px] shrink-0 flex-col">
          <div className="flex h-[504px]">
            <Drawing />
            <ToolColumn />
          </div>
          <CommandLine />
        </div>
        <Properties />
      </div>
      <StatusBar />
    </div>
  );
}

export default App;
